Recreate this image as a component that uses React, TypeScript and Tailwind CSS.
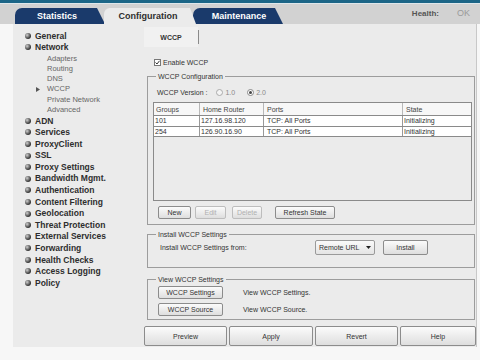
import React from "react";

// Sidebar menu entries
const topItemsA = ["General", "Network"];
const subItems = ["Adapters", "Routing", "DNS", "WCCP", "Private Network", "Advanced"];
const topItemsB = [
  "ADN",
  "Services",
  "ProxyClient",
  "SSL",
  "Proxy Settings",
  "Bandwidth Mgmt.",
  "Authentication",
  "Content Filtering",
  "Geolocation",
  "Threat Protection",
  "External Services",
  "Forwarding",
  "Health Checks",
  "Access Logging",
  "Policy",
];

const rows = [
  { group: "101", router: "127.16.98.120", ports: "TCP: All Ports", state: "Initializing" },
  { group: "254", router: "126.90.16.90", ports: "TCP: All Ports", state: "Initializing" },
];

const TopItem: React.FC<{ label: string }> = ({ label }) => (
  <div className="h-[11.6px] flex items-center pl-[12px]">
    <span className="w-[6px] h-[6px] rounded-full bg-[radial-gradient(circle_at_35%_35%,#d0d0d0,#3a3a3a_65%)] mr-[4px] shrink-0" />
    <span className="text-[8.5px] font-bold text-[#2e2e2e] leading-none whitespace-nowrap">
      {label}
    </span>
  </div>
);

const Btn: React.FC<{ label: string; className?: string; disabled?: boolean }> = ({
  label,
  className = "",
  disabled,
}) => (
  <div
    className={`flex items-center justify-center rounded-[2px] border bg-[linear-gradient(#fbfbfb,#dedede)] text-[7px] leading-none whitespace-nowrap ${
      disabled ? "border-[#bdbdbd] text-[#b0b0b0]" : "border-[#8c8c8c] text-[#333]"
    } ${className}`}
  >
    {label}
  </div>
);

export default function App() {
  return (
    <div className="w-[480px] h-[360px] overflow-hidden bg-[#f7f7f7] font-['Liberation_Sans',Arial,sans-serif] text-[#333]">
      {/* top strip */}
      <div className="h-[3px] bg-[#1c6687]" />
      <div className="h-[1px] bg-[#dfe7eb]" />

      {/* tab band */}
      <div className="h-[20px] bg-[#d2d2d2] flex items-end pl-[15px] pr-[10px]">
        <div className="relative w-[90px] h-[16px] rounded-tl-[7px] bg-[#1a3a6b] [clip-path:polygon(0_0,82px_0,90px_100%,0_100%)] flex items-center justify-center pr-[6px]">
          <span className="text-[9px] font-bold text-white leading-none">Statistics</span>
        </div>
        <div className="relative z-10 -ml-[1px] w-[92px] h-[16px] rounded-tl-[6px] bg-[#ebebeb] [clip-path:polygon(0_0,86px_0,92px_100%,0_100%)] flex items-center justify-center pr-[4px]">
          <span className="text-[9px] font-bold text-[#2e2e2e] leading-none">Configuration</span>
        </div>
        <div className="relative -ml-[3px] w-[90px] h-[16px] rounded-tl-[7px] bg-[#1a3a6b] [clip-path:polygon(0_0,82px_0,90px_100%,0_100%)] flex items-center justify-center pl-[2px]">
          <span className="text-[9px] font-bold text-white leading-none">Maintenance</span>
        </div>
        <div className="ml-auto self-stretch flex items-center">
          <span className="text-[8px] font-bold text-[#555]">Health:</span>
          <span className="ml-[18px] text-[9px] text-[#9a9a9a]">OK</span>
        </div>
      </div>

      {/* main panel */}
      <div className="flex h-[323px] ml-[13px] mr-[3px] bg-[#ebebeb]">
        {/* sidebar */}
        <div className="w-[131px] pt-[6px] flex flex-col">
          {topItemsA.map((t) => (
            <TopItem key={t} label={t} />
          ))}
          {subItems.map((s) => (
            <div key={s} className="h-[10.3px] flex items-center pl-[34px] relative">
              {s === "WCCP" && (
                <svg className="absolute left-[23px]" width="4" height="5" viewBox="0 0 4 5">
                  <path d="M0 0 L4 2.5 L0 5 Z" fill="#555" />
                </svg>
              )}
              <span className="text-[7.5px] text-[#666] leading-none whitespace-nowrap">{s}</span>
            </div>
          ))}
          {topItemsB.map((t) => (
            <TopItem key={t} label={t} />
          ))}
        </div>

        {/* content */}
        <div className="flex-1 flex flex-col border-r border-[#c8c8c8]">
          {/* sub tab */}
          <div className="h-[26px] flex items-center">
            <div className="w-[54px] h-[20px] bg-[#f1f1f1] flex items-center justify-center">
              <span className="text-[7px] font-bold text-[#333] leading-none">WCCP</span>
            </div>
            <div className="w-[1px] h-[14px] bg-[#8a8a8a]" />
          </div>

          {/* enable */}
          <div className="mt-[6px] h-[13px] flex items-center pl-[10px]">
            <div className="w-[7px] h-[7px] border border-[#777] bg-white flex items-center justify-center">
              <svg width="5" height="5" viewBox="0 0 5 5">
                <path d="M0.5 2.5 L2 4 L4.5 0.8" stroke="#333" strokeWidth="1" fill="none" />
              </svg>
            </div>
            <span className="ml-[2px] text-[7px] leading-none">Enable WCCP</span>
          </div>

          {/* WCCP configuration */}
          <fieldset className="mt-[3px] ml-[3px] mr-[1px] border border-[#9c9c9c] pb-[5px]">
            <legend className="ml-[8px] px-[2px] text-[7px] leading-[9px]">WCCP Configuration</legend>
            <div className="mt-[5px] h-[12px] flex items-center pl-[9px] text-[7px] leading-none">
              <span>WCCP Version :</span>
              <span className="ml-[9px] w-[7px] h-[7px] rounded-full border border-[#aaa] bg-[#f4f4f4]" />
              <span className="ml-[2px] text-[#888]">1.0</span>
              <span className="ml-[12px] w-[7px] h-[7px] rounded-full border border-[#888] bg-white flex items-center justify-center">
                <span className="w-[3px] h-[3px] rounded-full bg-[#444]" />
              </span>
              <span className="ml-[2px] text-[#888]">2.0</span>
            </div>

            {/* table */}
            <div className="mt-[4px] ml-[5px] mr-[2px] h-[99px] border border-[#8a8a8a] text-[7px] leading-none">
              <div className="grid grid-cols-[46px_64px_139px_1fr] h-[13px] bg-[#f7f7f7] border-b border-[#8a8a8a] text-[#444]">
                <div className="flex items-center pl-[2px] border-r border-[#b8b8b8]">Groups</div>
                <div className="flex items-center pl-[3px] border-r border-[#b8b8b8]">Home Router</div>
                <div className="flex items-center pl-[3px] border-r border-[#b8b8b8]">Ports</div>
                <div className="flex items-center pl-[3px]">State</div>
              </div>
              {rows.map((r) => (
                <div
                  key={r.group}
                  className="grid grid-cols-[46px_64px_139px_1fr] h-[10.5px] bg-white border-b border-[#8a8a8a]"
                >
                  <div className="flex items-center pl-[1px] border-r border-[#999]">{r.group}</div>
                  <div className="flex items-center pl-[1px] border-r border-[#999]">{r.router}</div>
                  <div className="flex items-center pl-[3px] border-r border-[#999]">{r.ports}</div>
                  <div className="flex items-center pl-[1px]">{r.state}</div>
                </div>
              ))}
            </div>

            <div className="mt-[5px] h-[13px] flex pl-[10px]">
              <Btn label="New" className="w-[33px]" />
              <Btn label="Edit" className="w-[31px] ml-[4px]" disabled />
              <Btn label="Delete" className="w-[30px] ml-[6px]" disabled />
              <Btn label="Refresh State" className="w-[60px] ml-[13px]" />
            </div>
          </fieldset>

          {/* install */}
          <fieldset className="mt-[5px] ml-[3px] mr-[1px] border border-[#9c9c9c] pb-[12px]">
            <legend className="ml-[8px] px-[2px] text-[7px] leading-[9px]">Install WCCP Settings</legend>
            <div className="mt-[1px] h-[15px] flex items-center pl-[12px] text-[7px] leading-none">
              <span className="w-[155px]">Install WCCP Settings from:</span>
              <div className="w-[60px] h-[15px] flex items-center justify-between px-[3px] rounded-[2px] border border-[#9a9a9a] bg-[linear-gradient(#fafafa,#e4e4e4)]">
                <span>Remote URL</span>
                <svg width="5" height="3" viewBox="0 0 5 3">
                  <path d="M0 0 L5 0 L2.5 3 Z" fill="#222" />
                </svg>
              </div>
              <Btn label="Install" className="w-[45px] h-[15px] ml-[8px]" />
            </div>
          </fieldset>

          {/* view */}
          <fieldset className="mt-[7px] ml-[3px] mr-[1px] border border-[#9c9c9c] pb-[3px]">
            <legend className="ml-[8px] px-[2px] text-[7px] leading-[9px]">View WCCP Settings</legend>
            <div className="mt-[2px] flex flex-col gap-[4px] pl-[10px] text-[7px] leading-none">
              <div className="flex items-center">
                <Btn label="WCCP Settings" className="w-[65px] h-[13px]" />
                <span className="ml-[20px]">View WCCP Settings.</span>
              </div>
              <div className="flex items-center">
                <Btn label="WCCP Source" className="w-[65px] h-[13px]" />
                <span className="ml-[20px]">View WCCP Source.</span>
              </div>
            </div>
          </fieldset>

          {/* bottom buttons */}
          <div className="mt-[6px] h-[20px] flex gap-[2px]">
            <Btn label="Preview" className="w-[83px]" />
            <Btn label="Apply" className="w-[84px]" />
            <Btn label="Revert" className="w-[83px]" />
            <Btn label="Help" className="flex-1" />
          </div>
        </div>
      </div>
    </div>
  );
}
